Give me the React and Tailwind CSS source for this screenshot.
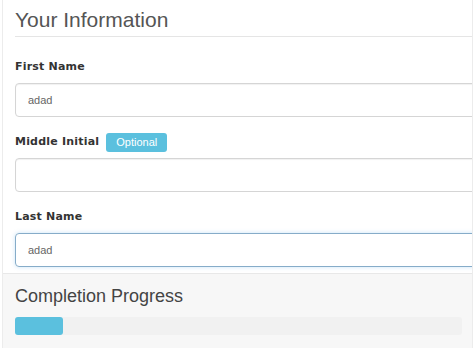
export default function App() {
  const fields = [
    { label: 'First Name', value: 'adad' },
    { label: 'Middle Initial', value: '', optional: true },
    { label: 'Last Name', value: 'adad', focused: true },
  ]

  return (
    <div className="w-[474px] h-[348px] overflow-hidden bg-white" style={{ fontFamily: '"Liberation Sans", Arial, sans-serif' }}>
      <div className="ml-[2px] w-[471px] h-[348px] border-l border-r border-[#ececec] flex flex-col overflow-hidden">
        <div className="pl-[12px]">
          <h2 className="pt-[7px] text-[21px] leading-[26px] text-[#555] font-normal">Your Information</h2>
          <div className="mt-[3px] border-b border-[#e5e5e5]"></div>

          {fields.map((f, i) => (
            <div key={f.label} className={i === 0 ? 'mt-[23px]' : 'mt-[18px]'}>
              <div className="flex items-center h-[14px] gap-[7px]">
                <span className="text-[11px] font-bold text-[#333] leading-[14px] tracking-[0.2px]" style={{ fontFamily: '"DejaVu Sans", Verdana, sans-serif' }}>{f.label}</span>
                {f.optional && (
                  <span className="inline-flex items-center h-[19px] px-[10px] rounded-[3px] bg-[#5bc0de] text-white text-[11px] leading-none">Optional</span>
                )}
              </div>
              <div
                className={
                  'mt-[9px] -mr-[5px] h-[34px] rounded-[4px] border flex items-center pl-[12px] text-[11px] text-[#666] ' +
                  (f.focused ? 'border-[#86acc9] shadow-[0_0_4px_rgba(102,175,233,0.35)]' : 'border-[#d5d5d5] shadow-[inset_0_1px_1px_rgba(0,0,0,0.06)]')
                }
              >
                {f.value}
              </div>
            </div>
          ))}
        </div>

        <div className="mt-[6px] flex-1 bg-[#f7f7f7] border-t border-[#e8e8e8] pl-[12px]">
          <h3 className="pt-[11px] text-[18px] leading-[22px] text-[#444] font-normal">Completion Progress</h3>
          <div className="mt-[10px] mr-[10px] h-[18px] rounded-[3px] bg-[#f1f1f1]">
            <div className="h-[18px] w-[48px] rounded-[3px] bg-[#5bc0de]"></div>
          </div>
        </div>
      </div>
    </div>
  )
}
